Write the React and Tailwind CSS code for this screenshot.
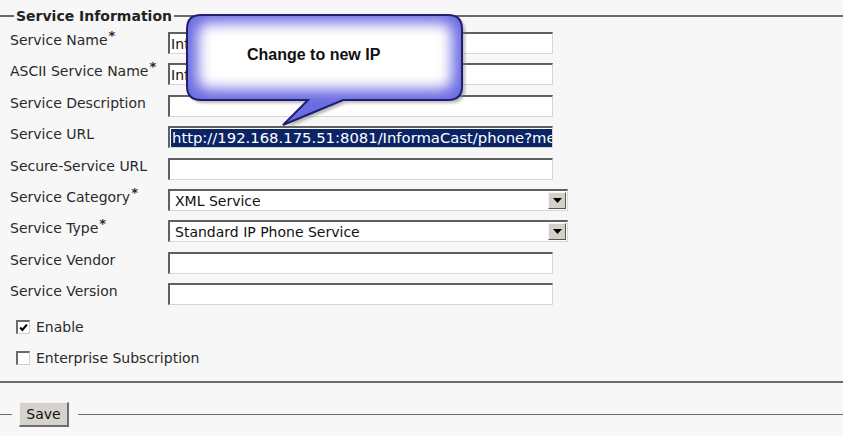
import React from "react";

const fieldBox =
  "h-[22px] bg-white border-t-2 border-l-2 border-r border-b border-t-[#5f5f5f] border-l-[#5f5f5f] border-r-[#d6d6d6] border-b-[#d6d6d6] overflow-hidden whitespace-nowrap text-[14px] leading-[18px] text-[#111]";

const rows = [
  { label: "Service Name", req: true, kind: "text", value: "InformaCast" },
  { label: "ASCII Service Name", req: true, kind: "text", value: "InformaCast" },
  { label: "Service Description", kind: "text", value: "" },
  {
    label: "Service URL",
    kind: "selected",
    value: "http://192.168.175.51:8081/InformaCast/phone?me",
  },
  { label: "Secure-Service URL", kind: "text", value: "" },
  { label: "Service Category", req: true, kind: "select", value: "XML Service" },
  { label: "Service Type", req: true, kind: "select", value: "Standard IP Phone Service" },
  { label: "Service Vendor", kind: "text", value: "" },
  { label: "Service Version", kind: "text", value: "" },
];

const Field = ({ row }) => {
  if (row.kind === "select") {
    return (
      <div className={`${fieldBox} w-[400px] flex items-stretch`}>
        <div className="flex-1 pl-[5px] pt-[1px]">{row.value}</div>
        <div className="w-[18px] my-[1px] mr-[1px] bg-[#d4d0c8] border-t border-l border-r border-b border-t-[#f4f4f4] border-l-[#f4f4f4] border-r-[#555] border-b-[#555] flex items-center justify-center">
          <svg width="9" height="5" viewBox="0 0 9 5">
            <path d="M0 0 H9 L4.5 5 Z" fill="#000" />
          </svg>
        </div>
      </div>
    );
  }
  if (row.kind === "selected") {
    // selected text fills the field height
    return (
      <div className={`${fieldBox} w-[385px] pl-[1px] pt-[1px]`}>
        <span className="bg-[#0b2466] text-white inline-block h-[18px] text-[14.8px] leading-[18px] px-[1px]">
          {row.value}
        </span>
      </div>
    );
  }
  return (
    <div className={`${fieldBox} w-[385px] pl-[1px] pt-[1px]`}>{row.value}</div>
  );
};

const Checkbox = ({ checked }) => (
  <span className="w-[14px] h-[14px] bg-white border-t-2 border-l-2 border-r border-b border-t-[#6a6a6a] border-l-[#6a6a6a] border-r-[#cfcfcf] border-b-[#cfcfcf] flex items-center justify-center">
    {checked && (
      <svg width="9" height="9" viewBox="0 0 8 8">
        <path d="M1 4 L3 6.2 L7 1.5" fill="none" stroke="#000" strokeWidth="1.8" />
      </svg>
    )}
  </span>
);

const bubblePath =
  "M23 7 H270 Q284 7 284 21 V78 Q284 92 270 92 H165 L105 117 L130 92 H23 Q9 92 9 78 V21 Q9 7 23 7 Z";

const Bubble = () => (
  <div className="absolute left-[178px] top-[8px] w-[310px] h-[125px]">
    <svg width="310" height="125" viewBox="0 0 310 125" className="absolute left-0 top-0">
      <defs>
        <clipPath id="bclip">
          <path d={bubblePath} />
        </clipPath>
        <filter id="bshadow" filterUnits="userSpaceOnUse" x="0" y="0" width="310" height="125">
          <feGaussianBlur stdDeviation="1.5" />
        </filter>
        <filter id="bglow" filterUnits="userSpaceOnUse" x="0" y="0" width="310" height="125">
          <feGaussianBlur stdDeviation="7" />
        </filter>
      </defs>
      <path
        d={bubblePath}
        fill="#7a7a7a"
        opacity="0.55"
        transform="translate(3 3)"
        filter="url(#bshadow)"
      />
      <path d={bubblePath} fill="#6c6ce2" />
      <g clipPath="url(#bclip)" filter="url(#bglow)">
        <rect x="20" y="15" width="254" height="66" rx="10" fill="#ffffff" />
        <rect x="34" y="24" width="226" height="46" fill="#ffffff" />
      </g>
      <path d={bubblePath} fill="none" stroke="#1f1f70" strokeWidth="2" />
    </svg>
    <span className="absolute left-[69px] top-[38px] text-[16px] leading-[18px] font-bold text-[#111] font-['Liberation_Sans',Arial,sans-serif] whitespace-nowrap">
      Change to new IP
    </span>
  </div>
);

export default function App() {
  return (
    <div className="relative w-[843px] h-[436px] bg-[#f7f7f7] overflow-hidden font-['DejaVu_Sans',Verdana,sans-serif] text-[#2a2a2a]">
      {/* legend line */}
      <div className="flex items-center h-[16px] mt-[8px]">
        <div className="w-[14px] h-[2px] bg-[#6b6b6b]" />
        <span className="px-[2px] text-[14px] leading-4 font-bold text-[#222]">
          Service Information
        </span>
        <div className="flex-1 h-[2px] bg-[#6b6b6b]" />
      </div>

      {/* fields */}
      <div className="mt-[8px]">
        {rows.map((row) => (
          <div key={row.label} className="flex h-[31.375px]">
            <div className="w-[158px] ml-[10px] text-[14px] leading-4 whitespace-nowrap">
              {row.label}
              {row.req && (
                <span className="font-bold text-[13px] relative top-[-5px] ml-[1px]">*</span>
              )}
            </div>
            <Field row={row} />
          </div>
        ))}
      </div>

      {/* checkboxes */}
      <div className="ml-[16px]">
        <div className="flex items-center h-[26px] gap-[6px]">
          <Checkbox checked />
          <span className="text-[14px] leading-4">Enable</span>
        </div>
        <div className="flex items-center h-[26px] mt-[5px] gap-[6px]">
          <Checkbox />
          <span className="text-[14px] leading-4">Enterprise Subscription</span>
        </div>
      </div>

      <div className="mt-[10px] h-[2px] bg-[#6b6b6b]" />

      {/* save bar */}
      <div className="flex items-center mt-[19px] h-[25px]">
        <div className="w-[12px] h-px bg-[#5c7282]" />
        <button className="ml-[7px] w-[50px] h-[25px] bg-[#d6d3cc] border-t border-l border-r-2 border-b-2 border-t-[#f2f2f2] border-l-[#f2f2f2] border-r-[#6e6e6e] border-b-[#6e6e6e] text-[14px] leading-4 text-[#111]">
          Save
        </button>
        <div className="ml-[9px] flex-1 h-px bg-[#5c7282]" />
      </div>

      <Bubble />
    </div>
  );
}
